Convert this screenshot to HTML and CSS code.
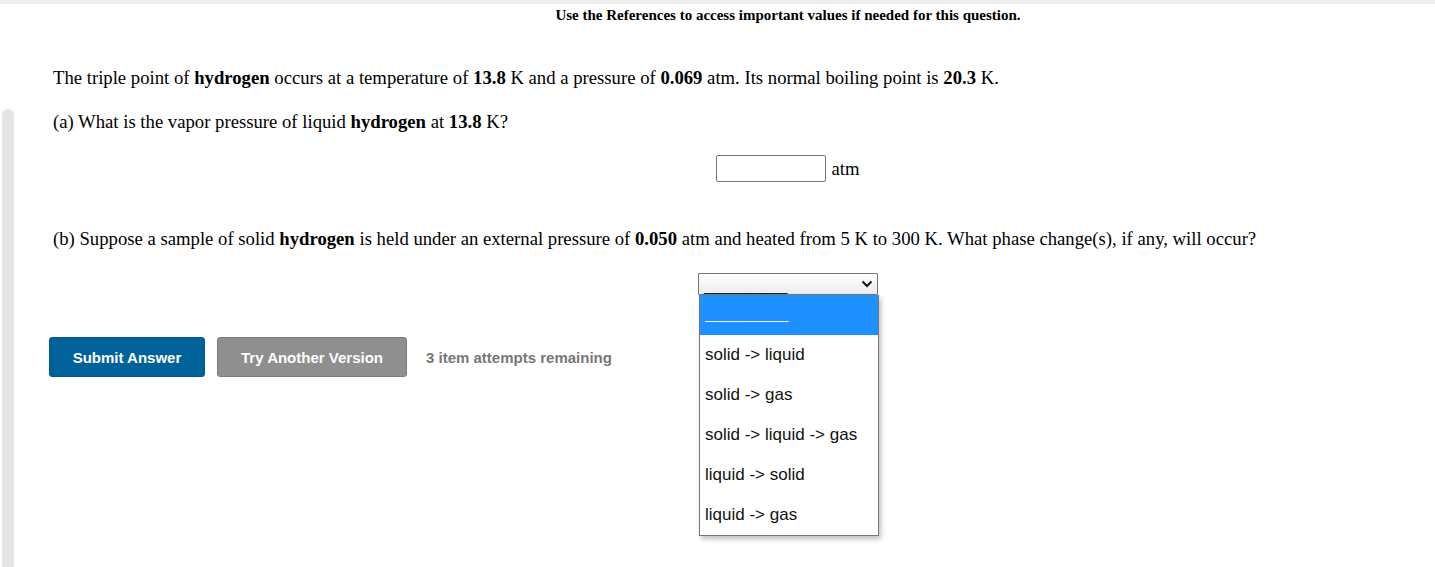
FILE: index.html
```html
<!DOCTYPE html>
<html lang="en">

<head>
  <meta charset="UTF-8">
  <title>Triple Point Question</title>
  <link rel="stylesheet" href="styles.css">
</head>

<body>
  <div class="top-bar"></div>
  <p class="references">Use the References to access important values if needed for this question.</p>

  <div class="page">
    <div class="side-rail"></div>

    <div class="question">
      <p class="line first">The triple point of <b>hydrogen</b> occurs at a temperature of <b>13.8</b> K and a pressure of <b>0.069</b> atm. Its normal boiling point is <b>20.3</b> K.</p>
      <p class="line">(a) What is the vapor pressure of liquid <b>hydrogen</b> at <b>13.8</b> K?</p>

      <div class="centered answer-row">
        <input type="text" class="answer-box">
        <span class="unit">atm</span>
      </div>

      <p class="line part-b">(b) Suppose a sample of solid <b>hydrogen</b> is held under an external pressure of <b>0.050</b> atm and heated from 5 K to 300 K. What phase change(s), if any, will occur?</p>

      <div class="centered select-row">
        <div class="select-wrap">
          <div class="fake-select">
            <span class="blank">____________</span>
            <svg class="chevron" width="12" height="8" viewBox="0 0 12 8">
              <path d="M1.5 1.5 L6 6 L10.5 1.5" fill="none" stroke="#111" stroke-width="2" />
            </svg>
          </div>
          <ul class="options">
            <li class="selected"><span class="blank">____________</span></li>
            <li>solid -&gt; liquid</li>
            <li>solid -&gt; gas</li>
            <li>solid -&gt; liquid -&gt; gas</li>
            <li>liquid -&gt; solid</li>
            <li>liquid -&gt; gas</li>
          </ul>
        </div>
      </div>

      <div class="actions">
        <button class="btn submit">Submit Answer</button>
        <button class="btn another">Try Another Version</button>
        <span class="attempts">3 item attempts remaining</span>
      </div>
    </div>
  </div>
</body>

</html>
```

FILE: styles.css
```css
body {
  margin: 0;
  padding: 0;
  background-color: #fff;
  font-family: "Liberation Serif", "Times New Roman", serif;
  color: #000;
  overflow: hidden;
}

.top-bar {
  height: 4px;
  background-color: #efefef;
}

.references {
  margin: 3px 0 0 141px;
  text-align: center;
  font-size: 15px;
  font-weight: bold;
  line-height: 16px;
}

.page {
  display: flex;
  position: relative;
  height: 547px;
}

.side-rail {
  position: absolute;
  left: 2px;
  top: 86px;
  bottom: 0;
  width: 12px;
  background-color: #e4e4e4;
  border-radius: 6px 6px 0 0;
}

.question {
  flex: 1;
  padding-left: 53px;
}

.line {
  margin: 0;
  font-size: 18.7px;
  line-height: 22px;
}

.line.first {
  margin-top: 44px;
}

.line + .line {
  margin-top: 22px;
}

.centered {
  margin-left: 88px;
  display: flex;
  justify-content: center;
}

.answer-row {
  margin-top: 22px;
  align-items: center;
  gap: 5px;
}

.answer-box {
  width: 108px;
  height: 25px;
  margin: 0;
  padding: 0;
  border: 1px solid #767676;
  border-radius: 2px;
}

.unit {
  font-size: 18.7px;
}

.part-b {
  margin-top: 46px;
}

.select-row {
  margin-top: 23px;
}

.select-wrap {
  position: relative;
  width: 180px;
}

.fake-select {
  height: 20px;
  border: 1px solid #767676;
  border-radius: 1px;
  background: linear-gradient(#fff, #ececec);
  display: flex;
  align-items: flex-end;
  justify-content: space-between;
  padding: 0 4px 0 5px;
  font-family: "Liberation Sans", Arial, sans-serif;
  font-size: 13px;
}

.blank {
  font-family: "Liberation Sans", Arial, sans-serif;
  font-size: 13px;
  letter-spacing: -0.3px;
  line-height: 14px;
}

.chevron {
  margin-bottom: 6px;
}

.options {
  position: absolute;
  top: 22px;
  left: 1px;
  width: 178px;
  margin: 0;
  padding: 0;
  list-style: none;
  background-color: #fff;
  border: 1px solid #767676;
  border-top: none;
  box-shadow: 2px 3px 5px rgba(0, 0, 0, 0.25);
  font-family: "Liberation Sans", Arial, sans-serif;
  font-size: 17px;
  z-index: 5;
}

.options li {
  height: 40px;
  line-height: 40px;
  padding-left: 5px;
  color: #111;
}

.options li.selected {
  background-color: #1e90ff;
  color: #fff;
}

.options li.selected .blank {
  display: inline-block;
  line-height: 14px;
  vertical-align: middle;
  margin-top: -2px;
}

.actions {
  margin-top: 42px;
  margin-left: -4px;
  display: flex;
  align-items: center;
  gap: 12px;
}

.btn {
  height: 40px;
  padding: 0;
  border-radius: 3px;
  font-family: "Liberation Sans", Arial, sans-serif;
  font-size: 15px;
  font-weight: bold;
  color: #fff;
  cursor: pointer;
}

.submit {
  width: 156px;
  background-color: #00629b;
  border: 1px solid #005a8e;
}

.another {
  width: 190px;
  background-color: #8f8f8f;
  border: 1px solid #7d7d7d;
}

.attempts {
  margin-left: 7px;
  font-family: "Liberation Sans", Arial, sans-serif;
  font-size: 15px;
  font-weight: bold;
  color: #777;
}
```
